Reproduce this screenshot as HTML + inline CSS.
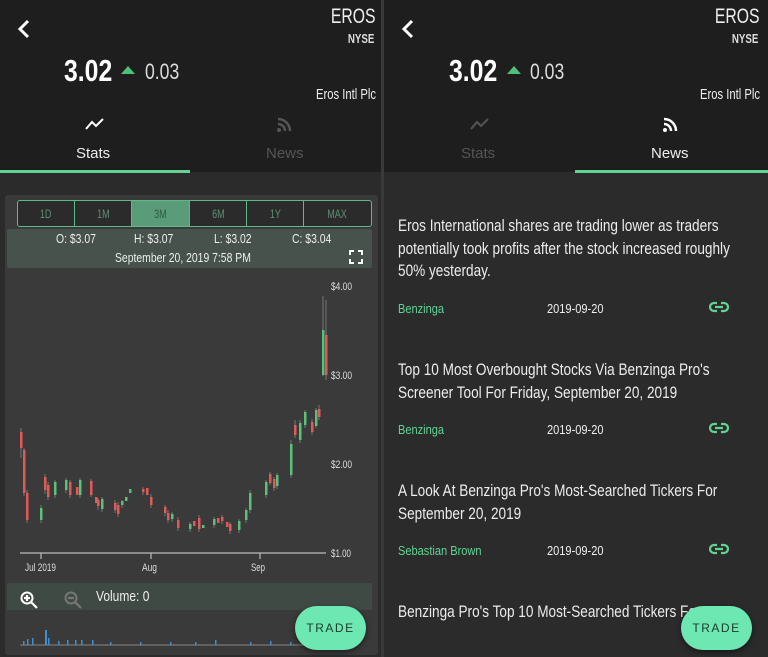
<!DOCTYPE html>
<html><head><meta charset="utf-8"><style>
*{margin:0;padding:0;box-sizing:border-box}
body{width:768px;height:657px;background:#2b2b2b;font-family:"Liberation Sans",sans-serif;color:#eee;position:relative;overflow:hidden}
.abs{position:absolute}
.hdr{position:absolute;top:0;width:381px;height:172px;background:#1e1e1e}
.nw{white-space:nowrap}
.c{transform:scaleX(.8);transform-origin:0 0}
.cr{transform:scaleX(.75);transform-origin:100% 0}
.g{color:#5fd494}
.trade{position:absolute;width:71px;height:44px;border-radius:22px;background:#6ee8b2;color:#1d3a2c;font-size:12px;letter-spacing:1.5px;text-align:center;line-height:44px;box-shadow:0 2px 6px rgba(0,0,0,.5)}
.rb{position:absolute;top:0;height:26px;border-right:1.5px solid #5fb88a;text-align:center;line-height:26px;font-size:12px;color:#5f8f75}
.rb span{display:inline-block;transform:scaleX(.75)}
.news{position:absolute;left:398px;font-size:17px;line-height:22.5px;color:#ececec;white-space:nowrap;transform:scaleX(.8);transform-origin:0 0}
.meta{position:absolute;font-size:13px;white-space:nowrap;transform:scaleX(.85);transform-origin:0 0}
</style></head><body>
<div class="hdr" style="left:0"></div>
<div class="hdr" style="left:384px;width:384px"></div>
<div class="abs" style="left:381px;top:0;width:3px;height:657px;background:#3a3a3a"></div>

<svg class="abs" style="left:17px;top:19px" width="14" height="20"><path d="M11 2 L3 10 L11 18" stroke="#fff" stroke-width="3" fill="none"/></svg>
<div class="abs nw cr" style="right:8px;top:5px;font-size:21px;color:#eee;left:auto;right:392px">EROS</div>
<div class="abs nw cr" style="right:394px;top:31px;font-size:13px;font-weight:bold;color:#ddd">NYSE</div>
<div class="abs nw c" style="left:64px;top:53px;font-size:31px;font-weight:bold;color:#fff">3.02</div>
<div class="abs" style="left:121px;top:66px;width:0;height:0;border-left:7px solid transparent;border-right:7px solid transparent;border-bottom:8px solid #4cc17a"></div>
<div class="abs nw c" style="left:145px;top:59px;font-size:22px;color:#ddd">0.03</div>
<div class="abs nw cr" style="right:392px;top:86px;font-size:15px;color:#eee">Eros Intl Plc</div>
<svg class="abs" style="left:85px;top:117px" width="20" height="14"><path d="M1 12 L7 5 L11 9 L18 2" stroke="#fff" stroke-width="2" fill="none"/></svg>
<div class="abs" style="left:76px;top:145px;font-size:15px;color:#eee">Stats</div>
<svg class="abs" style="left:276px;top:117px" width="16" height="16"><circle cx="3" cy="13" r="2" fill="#555"/><path d="M2 7a7 7 0 0 1 7 7M2 2a12 12 0 0 1 12 12" stroke="#555" stroke-width="2.5" fill="none"/></svg>
<div class="abs" style="left:266px;top:145px;font-size:15px;color:#555">News</div>
<div class="abs" style="left:0;top:170px;width:190px;height:3px;background:#5fd494"></div>

<div class="abs" style="left:5px;top:195px;width:373px;height:460px;background:#3a3a3a;border-radius:3px"></div>
<div class="abs" style="left:17px;top:200px;width:355px;height:27px;border:1.5px solid #5fb88a;border-radius:3px;background:#2b2b2b;overflow:hidden">
<div class="rb" style="left:0;width:57px"><span>1D</span></div><div class="rb" style="left:57px;width:57px"><span>1M</span></div><div class="rb" style="left:114px;width:58px;background:#5a9c7a;color:#2d5a44"><span>3M</span></div><div class="rb" style="left:172px;width:57px"><span>6M</span></div><div class="rb" style="left:229px;width:57px"><span>1Y</span></div><div class="rb" style="left:286px;width:67px;border:none"><span>MAX</span></div></div>
<div class="abs" style="left:7px;top:229px;width:365px;height:39px;background:#46524b;border-radius:2px"></div>
<div class="abs nw c" style="left:56px;top:231px;font-size:13px;color:#eee">O: $3.07</div>
<div class="abs nw c" style="left:134px;top:231px;font-size:13px;color:#eee">H: $3.07</div>
<div class="abs nw c" style="left:214px;top:231px;font-size:13px;color:#eee">L: $3.02</div>
<div class="abs nw c" style="left:292px;top:231px;font-size:13px;color:#eee">C: $3.04</div>
<div class="abs nw c" style="left:115px;top:250px;font-size:13px;color:#eee">September 20, 2019 7:58 PM</div>
<svg class="abs" style="left:349px;top:250px" width="14" height="14"><path d="M1 5V1H5M9 1H13V5M13 9V13H9M5 13H1V9" stroke="#fff" stroke-width="2" fill="none"/></svg>

<svg class="abs" style="left:0;top:270px" width="381" height="320">
<g font-size="11" fill="#ddd" font-family="Liberation Sans, sans-serif">
<text x="331" y="20" textLength="21" lengthAdjust="spacingAndGlyphs">$4.00</text><text x="331" y="109" textLength="21" lengthAdjust="spacingAndGlyphs">$3.00</text><text x="331" y="198" textLength="21" lengthAdjust="spacingAndGlyphs">$2.00</text><text x="331" y="287" textLength="20" lengthAdjust="spacingAndGlyphs">$1.00</text>
<text x="25" y="301" textLength="31" lengthAdjust="spacingAndGlyphs">Jul 2019</text><text x="142" y="301" textLength="15" lengthAdjust="spacingAndGlyphs">Aug</text><text x="251" y="301" textLength="14" lengthAdjust="spacingAndGlyphs">Sep</text></g>
<line x1="20" y1="283" x2="326" y2="283" stroke="#bbb" stroke-width="1.2"/>
<path d="M41 283v6M151 283v6M260 283v6" stroke="#bbb" stroke-width="1.2"/>
<g transform="translate(0,-270)">
<path d="M21 428v30M24 448v48M27 490v33M41 505v18M45 474v20M48 482v18M55 480v18M66 478v15M70 480v18M80 478v20M91 479v18M98 498v12M102 497v15M115 500v13M118 502v15M122 500v8M143 487v8M151 494v14M165 505v11M168 510v13M172 512v10M178 517v14M190 522v10M199 515v17M214 517v11M222 515v9M230 522v12M239 519v14M246 508v15M250 490v23M266 480v18M270 472v13M274 477v14M277 473v16M291 440v38M295 420v18M300 420v23M305 410v18M312 419v16M316 408v20M319 405v15M323 296v80M326 300v80" stroke="#777" stroke-width="1"/>
<g fill="#e05a5a">
<rect x="20" y="432" width="2.5" height="16"/><rect x="23" y="450" width="2.5" height="43"/><rect x="26" y="493" width="2.5" height="27"/><rect x="44" y="477" width="2.5" height="13"/><rect x="47" y="485" width="2.5" height="12"/><rect x="69" y="482" width="2.5" height="13"/><rect x="76" y="487" width="2.5" height="8"/><rect x="90" y="481" width="2.5" height="14"/><rect x="95" y="497" width="2.5" height="6"/><rect x="97" y="500" width="2.5" height="6"/><rect x="114" y="503" width="2.5" height="7"/><rect x="117" y="505" width="2.5" height="9"/><rect x="142" y="489" width="2.5" height="3"/><rect x="146" y="488" width="2.5" height="7"/><rect x="150" y="497" width="2.5" height="8"/><rect x="164" y="507" width="2.5" height="6"/><rect x="167" y="513" width="2.5" height="7"/><rect x="177" y="520" width="2.5" height="8"/><rect x="193" y="521" width="2.5" height="5"/><rect x="198" y="518" width="2.5" height="11"/><rect x="217" y="518" width="2.5" height="5"/><rect x="221" y="517" width="2.5" height="4"/><rect x="226" y="522" width="2.5" height="5"/><rect x="229" y="524" width="2.5" height="7"/><rect x="269" y="474" width="2.5" height="9"/><rect x="273" y="479" width="2.5" height="9"/><rect x="294" y="425" width="2.5" height="10"/><rect x="311" y="422" width="2.5" height="10"/><rect x="318" y="409" width="2.5" height="8"/><rect x="325" y="335" width="2.5" height="40"/>
</g>
<g fill="#5cbf7a">
<rect x="40" y="508" width="2.5" height="12"/><rect x="54" y="482" width="2.5" height="13"/><rect x="65" y="480" width="2.5" height="10"/><rect x="79" y="480" width="2.5" height="15"/><rect x="101" y="499" width="2.5" height="10"/><rect x="121" y="501" width="2.5" height="4"/><rect x="125" y="497" width="2.5" height="4"/><rect x="129" y="489" width="2.5" height="4"/><rect x="171" y="514" width="2.5" height="5"/><rect x="189" y="524" width="2.5" height="5"/><rect x="202" y="525" width="2.5" height="3"/><rect x="213" y="519" width="2.5" height="6"/><rect x="238" y="521" width="2.5" height="9"/><rect x="245" y="510" width="2.5" height="10"/><rect x="249" y="493" width="2.5" height="17"/><rect x="265" y="482" width="2.5" height="13"/><rect x="276" y="475" width="2.5" height="11"/><rect x="290" y="444" width="2.5" height="31"/><rect x="299" y="423" width="2.5" height="17"/><rect x="304" y="412" width="2.5" height="13"/><rect x="315" y="410" width="2.5" height="16"/><rect x="322" y="330" width="2.5" height="45"/>
</g></g>
</svg>

<div class="abs" style="left:7px;top:583px;width:365px;height:27px;background:#3f4a44"></div>
<svg class="abs" style="left:20px;top:591px" width="20" height="20"><circle cx="7" cy="7" r="5.5" stroke="#fff" stroke-width="2" fill="none"/><path d="M4 7h6M7 4v6M11 11l6 6" stroke="#fff" stroke-width="2.2"/></svg>
<svg class="abs" style="left:64px;top:591px" width="20" height="20"><circle cx="7" cy="7" r="5.5" stroke="#777" stroke-width="2" fill="none"/><path d="M4 7h6M11 11l6 6" stroke="#777" stroke-width="2.2"/></svg>
<div class="abs nw c" style="left:96px;top:588px;font-size:15px;color:#eee">Volume: 0</div>
<svg class="abs" style="left:20px;top:620px" width="300" height="30">
<line x1="0" y1="25" x2="300" y2="25" stroke="#888" stroke-width="1"/>
<g fill="#3f8fd0"><rect x="3" y="21" width="1.5" height="4"/><rect x="7" y="19" width="1.5" height="6"/><rect x="12" y="18" width="1.5" height="7"/><rect x="25" y="10" width="2" height="15"/><rect x="28" y="18" width="1.5" height="7"/><rect x="38" y="21" width="1.5" height="4"/><rect x="47" y="20" width="1.5" height="5"/><rect x="55" y="20" width="1.5" height="5"/><rect x="61" y="20" width="1.5" height="5"/><rect x="72" y="20" width="1.5" height="5"/><rect x="90" y="22" width="1.5" height="3"/><rect x="120" y="22" width="1.5" height="3"/><rect x="150" y="22" width="1.5" height="3"/><rect x="175" y="22" width="1.5" height="3"/><rect x="195" y="20" width="1.5" height="5"/><rect x="230" y="22" width="1.5" height="3"/><rect x="250" y="21" width="1.5" height="4"/><rect x="270" y="22" width="1.5" height="3"/></g></svg>
<div class="trade" style="left:295px;top:606px">TRADE</div>

<svg class="abs" style="left:401px;top:19px" width="14" height="20"><path d="M11 2 L3 10 L11 18" stroke="#fff" stroke-width="3" fill="none"/></svg>
<div class="abs nw cr" style="right:8px;top:5px;font-size:21px;color:#eee">EROS</div>
<div class="abs nw cr" style="right:10px;top:31px;font-size:13px;font-weight:bold;color:#ddd">NYSE</div>
<div class="abs nw c" style="left:449px;top:53px;font-size:31px;font-weight:bold;color:#fff">3.02</div>
<div class="abs" style="left:507px;top:66px;width:0;height:0;border-left:7px solid transparent;border-right:7px solid transparent;border-bottom:8px solid #4cc17a"></div>
<div class="abs nw c" style="left:530px;top:59px;font-size:22px;color:#ddd">0.03</div>
<div class="abs nw cr" style="right:8px;top:86px;font-size:15px;color:#eee">Eros Intl Plc</div>
<svg class="abs" style="left:470px;top:117px" width="20" height="14"><path d="M1 12 L7 5 L11 9 L18 2" stroke="#555" stroke-width="2" fill="none"/></svg>
<div class="abs" style="left:461px;top:145px;font-size:15px;color:#555">Stats</div>
<svg class="abs" style="left:662px;top:117px" width="16" height="16"><circle cx="3" cy="13" r="2" fill="#fff"/><path d="M2 7a7 7 0 0 1 7 7M2 2a12 12 0 0 1 12 12" stroke="#fff" stroke-width="2.5" fill="none"/></svg>
<div class="abs" style="left:651px;top:145px;font-size:15px;color:#eee">News</div>
<div class="abs" style="left:575px;top:170px;width:193px;height:3px;background:#5fd494"></div>

<div class="news" style="top:215px">Eros International shares are trading lower as traders<br>potentially took profits after the stock increased roughly<br>50% yesterday.</div>
<div class="news" style="top:359px">Top 10 Most Overbought Stocks Via Benzinga Pro's<br>Screener Tool For Friday, September 20, 2019</div>
<div class="news" style="top:480px">A Look At Benzinga Pro's Most-Searched Tickers For<br>September 20, 2019</div>
<div class="news" style="top:601px">Benzinga Pro's Top 10 Most-Searched Tickers For</div>

<div class="meta g" style="left:398px;top:301px">Benzinga</div><div class="meta" style="left:547px;top:301px">2019-09-20</div>
<div class="meta g" style="left:398px;top:422px">Benzinga</div><div class="meta" style="left:547px;top:422px">2019-09-20</div>
<div class="meta g" style="left:398px;top:543px">Sebastian Brown</div><div class="meta" style="left:547px;top:543px">2019-09-20</div>
<svg class="abs" style="left:709px;top:301px" width="20" height="12"><path d="M8 2H5a4 4 0 0 0 0 8h3M12 2h3a4 4 0 0 1 0 8h-3M6 6h8" stroke="#5fd494" stroke-width="2.2" fill="none"/></svg>
<svg class="abs" style="left:709px;top:422px" width="20" height="12"><path d="M8 2H5a4 4 0 0 0 0 8h3M12 2h3a4 4 0 0 1 0 8h-3M6 6h8" stroke="#5fd494" stroke-width="2.2" fill="none"/></svg>
<svg class="abs" style="left:709px;top:543px" width="20" height="12"><path d="M8 2H5a4 4 0 0 0 0 8h3M12 2h3a4 4 0 0 1 0 8h-3M6 6h8" stroke="#5fd494" stroke-width="2.2" fill="none"/></svg>
<div class="trade" style="left:681px;top:606px">TRADE</div>
</body></html>
